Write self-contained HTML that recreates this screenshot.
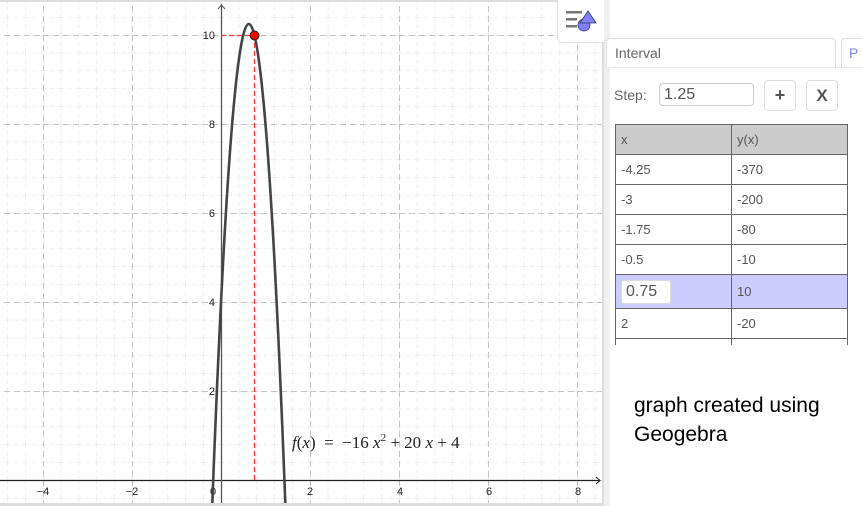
<!DOCTYPE html>
<html style="overflow:hidden;width:862px;height:506px"><head><meta charset="utf-8"><style>
body{margin:0;width:862px;height:506px;overflow:hidden;background:#fff;font-family:"Liberation Sans",sans-serif;position:relative}
.abs{position:absolute}
.tbl{position:absolute;left:615px;top:124px;border-collapse:collapse;font-size:13px;color:#555}
.tbl td{border:1px solid #666;height:29px;padding:0 0 0 5px;width:110px}
</style></head><body>
<svg class="abs" style="left:0;top:0" width="603" height="504">
<defs>
<pattern id="mn" x="221" y="480" width="17.8" height="17.8" patternUnits="userSpaceOnUse">
<path d="M0 0V17.8M0 0H17.8" stroke="#e2e2e2" stroke-width="1" stroke-dasharray="4,3" fill="none"/>
</pattern>
<pattern id="mj" x="221" y="480" width="89" height="89" patternUnits="userSpaceOnUse">
<path d="M0.5 0V89M0 0.5H89" stroke="#c4c4c4" stroke-width="1" stroke-dasharray="6,4" fill="none"/>
</pattern>
</defs>
<rect width="603" height="504" fill="url(#mn)"/>
<rect width="603" height="504" fill="url(#mj)"/>
<line x1="0" y1="480.5" x2="600" y2="480.5" stroke="#222" stroke-width="1.3"/>
<path d="M596 477l4 3.5-4 3.5" stroke="#222" fill="none"/>
<line x1="221.5" y1="4" x2="221.5" y2="504" stroke="#555" stroke-width="1.3"/>
<path d="M218 9l3.5-4 3.5 4" stroke="#555" fill="none"/>
<g font-size="11" fill="#222" text-anchor="end">
<text x="215" y="39">10</text><text x="215" y="128">8</text><text x="215" y="217">6</text><text x="215" y="306">4</text><text x="215" y="395">2</text>
</g>
<g font-size="11" fill="#222" text-anchor="middle">
<text x="43" y="495">−4</text><text x="132" y="495">−2</text><text x="213" y="495">0</text><text x="310" y="495">2</text><text x="400" y="495">4</text><text x="489" y="495">6</text><text x="578" y="495">8</text>
</g>
<line x1="221" y1="35.5" x2="254" y2="35.5" stroke="#f33" stroke-dasharray="5,3" stroke-width="1.2"/>
<line x1="254.5" y1="35" x2="254.5" y2="480" stroke="#f33" stroke-dasharray="5,3" stroke-width="1.2"/>
<path d="M209.9 569 Q248.8 -521 287.75 569" stroke="#444" stroke-width="2.6" fill="none"/>
<circle cx="254.5" cy="35.5" r="4.5" fill="#f00" stroke="#222" stroke-width="1"/>
<text x="292" y="448" font-family="Liberation Serif,serif" font-size="17" fill="#222"><tspan font-style="italic">f</tspan>(<tspan font-style="italic">x</tspan>) &#160;= &#160;−16 <tspan font-style="italic">x</tspan><tspan font-size="11" dy="-7">2</tspan><tspan dy="7"> + 20 </tspan><tspan font-style="italic">x</tspan> + 4</text>
</svg>
<div class="abs" style="left:0;top:0;width:603px;height:2px;background:#ddd"></div>
<div class="abs" style="left:0;top:503px;width:603px;height:3px;background:#ddd"></div>
<div class="abs" style="left:602px;top:0;width:2px;height:506px;background:#ddd"></div>
<div class="abs" style="left:557px;top:0;width:46px;height:42px;background:#fff;border:1px solid #e0e0e0;border-top:none;border-radius:0 0 0 5px"></div>
<svg class="abs" style="left:562px;top:8px" width="40" height="28">
<rect x="4" y="3" width="16" height="2.5" fill="#777"/><rect x="4" y="10" width="11" height="2.5" fill="#777"/><rect x="4" y="17" width="11" height="2.5" fill="#777"/>
<circle cx="22" cy="17" r="6" fill="#8080ff" stroke="#336" stroke-width="0.8"/>
<path d="M26 3 L34 15 L18 15 Z" fill="#8080ff" stroke="#336" stroke-width="0.8"/>
</svg>
<div class="abs" style="left:604px;top:0;width:6px;height:506px;background:#f0f0f0"></div>
<div class="abs" style="left:606px;top:38px;height:29px;border:1px solid #ddd;border-bottom:none;border-radius:4px 4px 0 0;background:#fff;font-size:14px;color:#666;line-height:28px;padding-left:8px;box-sizing:border-box;width:230px">Interval</div>
<div class="abs" style="left:841px;top:38px;width:21px;height:29px;border:1px solid #ddd;border-bottom:none;border-right:none;border-radius:4px 0 0 0;background:#fff;font-size:14px;color:#8080ff;line-height:28px;padding-left:7px;box-sizing:border-box">P</div>
<div class="abs" style="left:610px;top:67px;width:252px;height:1px;background:#e6e6e6"></div>
<div class="abs" style="left:614px;top:87px;font-size:14px;color:#666">Step:</div>
<div class="abs" style="left:659px;top:83px;width:95px;height:23px;border:1px solid #ccc;border-radius:4px;box-sizing:border-box;font-size:16px;color:#555;line-height:22px;padding-left:4px">1.25</div>
<div class="abs" style="left:764px;top:80px;width:32px;height:31px;border:1px solid #ddd;border-radius:4px;box-sizing:border-box;text-align:center;font-size:18px;font-weight:bold;color:#555;line-height:28px">+</div>
<div class="abs" style="left:806px;top:80px;width:32px;height:31px;border:1px solid #ddd;border-radius:4px;box-sizing:border-box;text-align:center;font-size:17px;font-weight:bold;color:#555;line-height:29px">X</div>
<div class="abs" style="left:610px;top:120px;width:252px;height:225px;overflow:hidden">
<table class="tbl" style="left:5px;top:4px">
<tr style="background:#ccc"><td>x</td><td>y(x)</td></tr>
<tr><td>-4.25</td><td>-370</td></tr>
<tr><td>-3</td><td>-200</td></tr>
<tr><td>-1.75</td><td>-80</td></tr>
<tr><td>-0.5</td><td>-10</td></tr>
<tr style="background:#ccccff"><td style="height:33px"><span style="display:inline-block;width:44px;height:22px;background:#fff;border:1px solid #ddd;border-radius:3px;font-size:16px;line-height:22px;padding-left:4px">0.75</span></td><td style="height:33px">10</td></tr>
<tr><td>2</td><td>-20</td></tr>
<tr><td>&#160;</td><td>&#160;</td></tr>
</table>
</div>
<div class="abs" style="left:610px;top:345px;width:252px;height:161px;background:#fff"></div>
<div class="abs" style="left:634px;top:391px;font-size:21px;line-height:29px;color:#000;font-family:'Liberation Sans','DejaVu Sans',sans-serif;white-space:nowrap">graph created using<br>Geogebra</div>
</body></html>
